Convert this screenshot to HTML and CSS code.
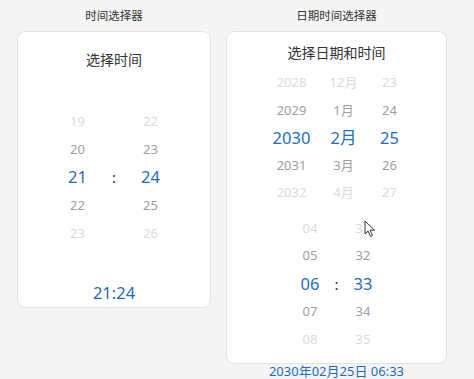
FILE: index.html
```html
<!DOCTYPE html>
<html lang="zh">
<head>
<meta charset="utf-8">
<link rel="stylesheet" href="styles.css">
</head>
<body>
<div class="page">
  <section class="col col-time">
    <div class="label">时间选择器</div>
    <div class="card card-time">
      <div class="title">选择时间</div>
      <div class="wheel wheel-time">
        <div class="wcol w40">
          <div class="it far">19</div>
          <div class="it near">20</div>
          <div class="it sel">21</div>
          <div class="it near">22</div>
          <div class="it far">23</div>
        </div>
        <div class="sep s33">:</div>
        <div class="wcol w40">
          <div class="it far">22</div>
          <div class="it near">23</div>
          <div class="it sel">24</div>
          <div class="it near">25</div>
          <div class="it far">26</div>
        </div>
      </div>
      <div class="result">21:24</div>
    </div>
  </section>
  <section class="col col-dt">
    <div class="label">日期时间选择器</div>
    <div class="card card-dt">
      <div class="title title-dt">选择日期和时间</div>
      <div class="wheel wheel-date">
        <div class="wcol wy">
          <div class="it far">2028</div>
          <div class="it near">2029</div>
          <div class="it sel">2030</div>
          <div class="it near">2031</div>
          <div class="it far">2032</div>
        </div>
        <div class="wcol wm">
          <div class="it far">12月</div>
          <div class="it near">1月</div>
          <div class="it sel">2月</div>
          <div class="it near">3月</div>
          <div class="it far">4月</div>
        </div>
        <div class="wcol wd">
          <div class="it far">23</div>
          <div class="it near">24</div>
          <div class="it sel">25</div>
          <div class="it near">26</div>
          <div class="it far">27</div>
        </div>
      </div>
      <div class="wheel wheel-clock">
        <div class="wcol w36">
          <div class="it far">04</div>
          <div class="it near">05</div>
          <div class="it sel">06</div>
          <div class="it near">07</div>
          <div class="it far">08</div>
        </div>
        <div class="sep s17">:</div>
        <div class="wcol w36 cursor-host">
          <div class="it far">31</div>
          <div class="it near">32</div>
          <div class="it sel">33</div>
          <div class="it near">34</div>
          <div class="it far">35</div>
          <svg class="cursor" width="12" height="18" viewBox="0 0 12 18"><path d="M1 1 L1 14 L4 11 L6.5 16.5 L8.5 15.5 L6 10.2 L10.5 10.2 Z" fill="#fff" stroke="#333" stroke-width="1" stroke-linejoin="round"/></svg>
        </div>
      </div>
    </div>
    <div class="out">2030年02月25日 06:33</div>
  </section>
</div>
</body>
</html>
```
FILE: styles.css
```css
html, body {
  margin: 0;
  padding: 0;
  background: #f5f5f5;
}
body {
  font-family: "Noto Sans", "Noto Sans CJK SC", sans-serif;
  color: #333;
  width: 474px;
  height: 379px;
  overflow: hidden;
}
.page {
  display: flex;
  gap: 15px;
  padding: 8px 0 0 17px;
  align-items: flex-start;
}
.col {
  display: flex;
  flex-direction: column;
  align-items: center;
}
.col-time { width: 194px; }
.col-dt { width: 221px; }
.label {
  font-size: 11.5px;
  line-height: 16px;
  height: 16px;
  color: #333;
  margin-bottom: 7px;
}
.card {
  box-sizing: border-box;
  width: 100%;
  background: #fff;
  border: 1px solid #e4e4e4;
  border-radius: 8px;
  display: flex;
  flex-direction: column;
  align-items: center;
}
.card-time { height: 277px; padding-top: 18px; }
.card-dt { height: 333px; padding-top: 11px; }
.title {
  font-size: 14px;
  line-height: 20px;
  height: 20px;
  color: #333;
}
.wheel {
  display: flex;
  justify-content: center;
}
.wheel-time { margin-top: 37px; }
.wheel-date { margin-top: 6px; margin-left: 2px; }
.wheel-clock { margin-top: 8px; }
.wcol {
  display: flex;
  flex-direction: column;
  align-items: center;
}
.w40 { width: 40px; }
.w36 { width: 36px; }
.wy { width: 50px; }
.wm { width: 54px; }
.wd { width: 38px; }
.it {
  height: 28px;
  line-height: 28px;
  font-size: 13px;
  white-space: nowrap;
}
.wheel-date .it { height: 27.5px; line-height: 27.5px; }
.wheel-clock .it { height: 27.8px; line-height: 27.8px; }
.far { color: #dadada; }
.near { color: #9e9e9e; }
.sel { color: #1e6cc2; font-size: 16.5px; }
.sep {
  display: flex;
  align-items: center;
  justify-content: center;
  font-size: 15px;
  color: #333;
}
.s33 { width: 33px; }
.s17 { width: 17px; }
.result {
  margin-top: 35px;
  font-size: 16.5px;
  line-height: 22px;
  color: #1e6cc2;
}
.out {
  font-size: 13px;
  line-height: 14px;
  color: #1e6cc2;
  margin-top: 0;
}
.cursor-host { position: relative; }
.cursor {
  position: absolute;
  left: 19px;
  top: 5px;
}
```
